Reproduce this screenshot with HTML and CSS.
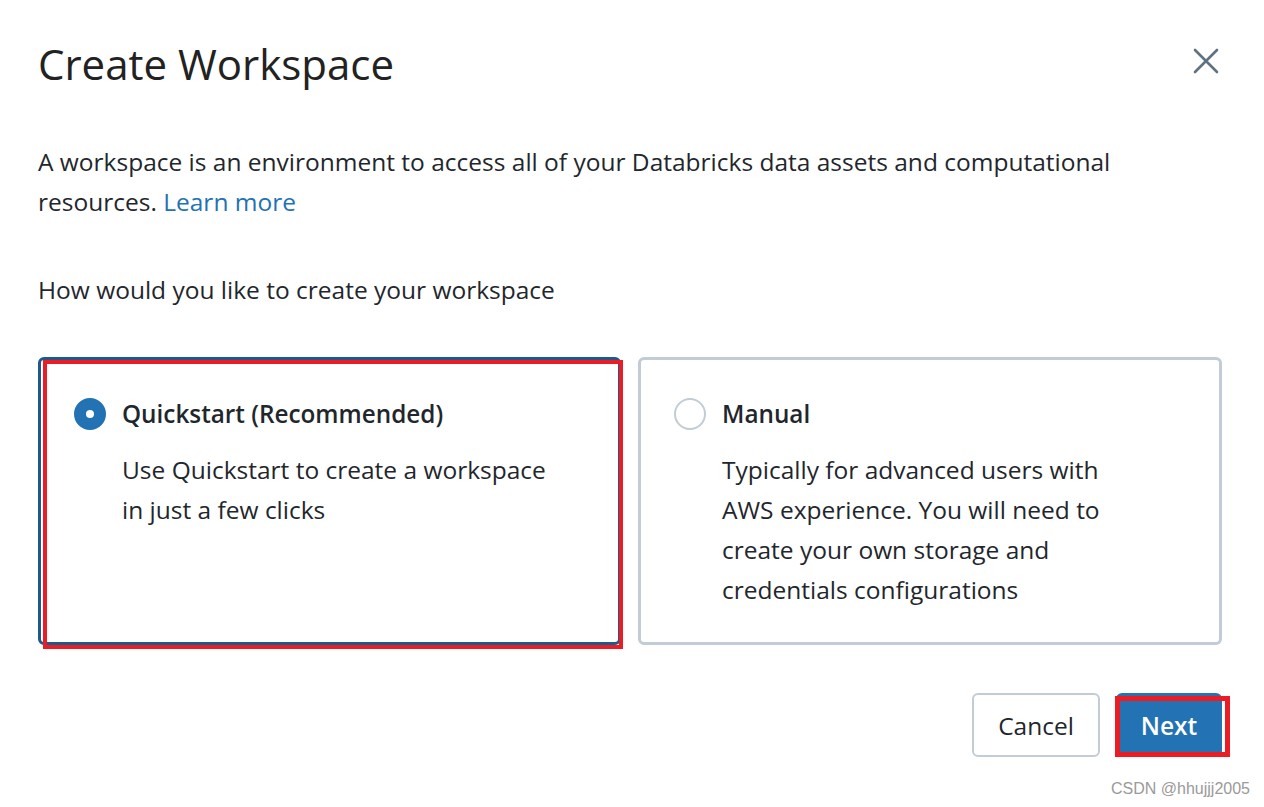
FILE: index.html
```html
<!DOCTYPE html>
<html lang="en">
<head>
<meta charset="utf-8">
<title>Create Workspace</title>
<link rel="stylesheet" href="styles.css">
</head>
<body>
<div class="dialog">
  <div class="header">
    <h1 class="title">Create Workspace</h1>
    <button class="close" aria-label="Close">
      <svg width="28" height="28" viewBox="0 0 28 28"><path d="M3 3 L25 25 M25 3 L3 25" stroke="#5f7281" stroke-width="2.6" stroke-linecap="round" fill="none"/></svg>
    </button>
  </div>
  <p class="intro">A workspace is an environment to access all of your Databricks data assets and computational<br>resources. <a class="link" href="#">Learn more</a></p>
  <p class="question">How would you like to create your workspace</p>
  <div class="options">
    <div class="card selected">
      <div class="card-head"><span class="radio on"></span><span class="card-title">Quickstart (Recommended)</span></div>
      <p class="card-desc">Use Quickstart to create a workspace<br>in just a few clicks</p>
      <span class="mark mark-card"></span>
    </div>
    <div class="card">
      <div class="card-head"><span class="radio"></span><span class="card-title">Manual</span></div>
      <p class="card-desc">Typically for advanced users with<br>AWS experience. You will need to<br>create your own storage and<br>credentials configurations</p>
    </div>
  </div>
  <div class="actions">
    <button class="btn btn-cancel">Cancel</button>
    <button class="btn btn-next">Next<span class="mark mark-btn"></span></button>
  </div>
</div>
<div class="watermark">CSDN @hhujjj2005</div>
</body>
</html>
```
FILE: styles.css
```css
* { box-sizing: border-box; }
html, body { margin: 0; padding: 0; background: #fff; }
body {
  font-family: "Open Sans", "Noto Sans", sans-serif;
  color: #1f272d;
  width: 1264px;
  height: 807px;
  position: relative;
  overflow: hidden;
}
.dialog { padding: 32px 42px 0 38px; }
.header { display: flex; justify-content: space-between; align-items: center; height: 64px; }
.title { margin: 0; font-size: 42px; font-weight: 400; line-height: 64px; color: #222; }
.close { background: none; border: 0; padding: 0; margin-right: 2px; width: 28px; height: 28px; display: flex; align-items: center; justify-content: center; margin-top: -6px; }
.intro { margin: 46px 0 0; font-size: 24.5px; line-height: 40px; }
.link { color: #2272b4; text-decoration: none; }
.question { margin: 48px 0 0; font-size: 24.5px; line-height: 40px; }
.options { margin-top: 47px; display: grid; grid-template-columns: 583px 584px; column-gap: 17px; }
.card {
  position: relative;
  border: 3px solid #c1ccd7;
  border-radius: 6px;
  padding: 34px 30px 32px 33px;
}
.card.selected { border-color: #1c5a8e; }
.card-head { display: flex; align-items: center; height: 40px; gap: 16px; }
.radio { width: 32px; height: 32px; border-radius: 50%; border: 2px solid #c1ccd7; flex: none; background: #fff; position: relative; }
.radio.on { background: #2272b4; border-color: #2272b4; }
.radio.on::after { content: ""; position: absolute; left: 50%; top: 50%; width: 8px; height: 8px; margin: -4px 0 0 -4px; border-radius: 50%; background: #fff; }
.card-title { font-size: 24.3px; font-weight: 600; line-height: 40px; }
.card-desc { margin: 16px 0 0 48px; font-size: 24.5px; line-height: 40px; }
.mark { position: absolute; border: 4px solid #ec1c24; pointer-events: none; }
.mark-card { left: 2px; top: 0; right: -5px; bottom: -7px; }
.actions { margin-top: 48px; display: flex; justify-content: flex-end; gap: 16px; }
.btn { height: 64px; border-radius: 6px; font-family: inherit; font-size: 24.5px; padding: 0; position: relative; }
.btn-cancel { width: 128px; background: #fff; border: 2px solid #c1ccd7; color: #1f272d; }
.btn-next { width: 106px; background: #2272b4; border: 0; color: #fff; font-weight: 600; }
.mark-btn { border-width: 5px; left: -1px; top: 3px; right: -8px; bottom: 0; }
.watermark { position: absolute; right: 14px; top: 779px; font-family: "Liberation Sans", Arial, sans-serif; font-size: 16px; color: #9a9a9a; line-height: 20px; }
```
